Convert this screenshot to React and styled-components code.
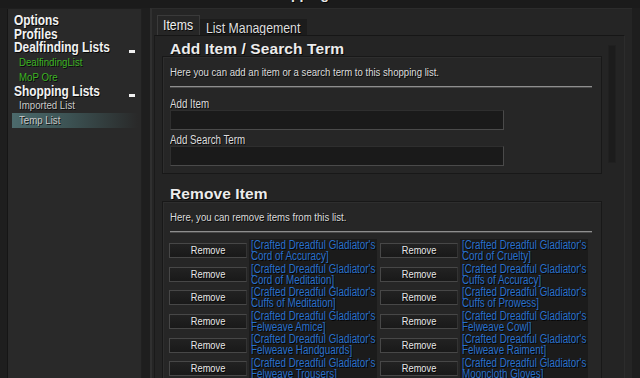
import styled, { createGlobalStyle } from 'styled-components';

const SANS = `"Liberation Sans", Arial, sans-serif`;
const SHADOW = '1px 1px 0 rgba(0, 0, 0, 0.85)';

const GlobalStyle = createGlobalStyle`
  html, body {
    margin: 0;
    padding: 0;
    background: #1d1d1d;
    overflow: hidden;
  }
  * {
    box-sizing: border-box;
  }
`;

// the game UI uses an Arial Narrow style face; squeeze Liberation Sans to its width
const Narrow = styled.span`
  display: inline-block;
  white-space: nowrap;
  transform: scaleX(0.82);
  transform-origin: ${({ $center }) => ($center ? 'center' : 'left')} center;
`;

const StyledPage = styled.div`
  width: 640px;
  height: 378px;
  overflow: hidden;
  display: flex;
  flex-direction: column;
  background: #1e1e1e;
  font-family: ${SANS};
  text-shadow: ${SHADOW};
`;

const StyledTitleStrip = styled.div`
  height: 8px;
  flex: none;
  overflow: hidden;
  background: #1b1b1b;
  display: flex;
  justify-content: center;
  padding-right: 10px;
`;

const StyledTitle = styled.span`
  margin-top: -14px;
  font: bold 14px ${SANS};
  line-height: 16px;
  color: #e6e6e6;
`;

const StyledBody = styled.div`
  flex: 1;
  min-height: 0;
  display: flex;
  gap: 8px;
  padding-left: 7px;
`;

const StyledSidebar = styled.nav`
  width: 135px;
  margin-top: 1px;
  padding: 5px 3px 0 4px;
  background: #292929;
  border-left: 1px solid #151515;
  border-right: 1px solid #202020;
  display: flex;
  flex-direction: column;
`;

const StyledNavHeader = styled.div`
  display: grid;
  grid-template-columns: minmax(0, 1fr) auto;
  align-items: start;
  padding-left: 2px;
  font-weight: bold;
  font-size: 14.5px;
  line-height: 13.5px;
  color: #f2f2f2;
`;

const StyledCollapse = styled.span`
  width: 6px;
  height: 3px;
  margin: 9px 3px 0 0;
  background: #f0f0f0;
`;

const StyledNavItem = styled.div`
  padding-left: 7px;
  font-size: 11.8px;
  line-height: 15px;
  color: ${({ $tone }) => ($tone === 'green' ? '#3cb524' : '#cacaca')};
  background: ${({ $selected }) =>
    $selected ? 'linear-gradient(to right, #4c6a6c 0%, #3c5253 45%, rgba(41,41,41,0) 100%)' : 'none'};
`;

const StyledMain = styled.main`
  width: 482px;
  display: flex;
  flex-direction: column;
  background: #252525;
  border-left: 2px solid #303030;
  border-top: 1px solid #2c2c2c;
`;

const StyledTabs = styled.div`
  display: flex;
  align-items: flex-end;
  padding: 6px 0 0 5px;
  height: 26px;
  flex: none;
`;

const StyledTab = styled.div`
  width: ${({ $width }) => $width}px;
  height: ${({ $active }) => ($active ? '20px' : '16px')};
  padding-left: ${({ $active }) => ($active ? '5px' : '6px')};
  font-size: 15px;
  line-height: ${({ $active }) => ($active ? '18px' : '17px')};
  color: ${({ $active }) => ($active ? '#f0f0f0' : '#dedede')};
  background: ${({ $active }) => ($active ? '#262626' : '#1c1c1c')};
  border: ${({ $active }) => ($active ? '1px solid #3a3a3a' : 'none')};
  border-bottom: none;
  overflow: hidden;
`;

const StyledFrame = styled.div`
  flex: 1;
  min-height: 0;
  margin: 0 7px 0 2px;
  padding: 0 8px 0 7px;
  display: flex;
  align-items: flex-start;
  background: #242424;
  border-top: 1px solid #161616;
  border-left: 1px solid #1a1a1a;
  border-right: 1px solid #2c2c2c;
`;

const StyledContent = styled.div`
  width: 440px;
  flex: none;
`;

const StyledScrollTrack = styled.div`
  width: 9px;
  margin-left: 6px;
  padding-top: 9px;
`;

const StyledScrollThumb = styled.div`
  height: 118px;
  background: #1c1c1c;
  border: 1px solid #202020;
`;

const StyledHeading = styled.h2`
  margin: ${({ $first }) => ($first ? '5px' : '12px')} 0 0;
  padding-left: 8px;
  font: bold 15.5px ${SANS};
  line-height: 15px;
  color: #ececec;
  letter-spacing: 0.1px;
`;

const StyledGroup = styled.section`
  padding: 8px 7px 7px;
  background: #262626;
  border: 1px solid #181818;
  box-shadow: inset 1px 1px 0 #2e2e2e;
`;

const StyledText = styled.div`
  font-size: 11.7px;
  line-height: 13px;
  color: #dcdcdc;
`;

const StyledRule = styled.hr`
  margin: 8px 2px 0 0;
  height: 2px;
  border: none;
  border-top: 1px solid #8e8e8e;
  border-bottom: 1px solid #4a4a4a;
`;

const StyledLabel = styled.label`
  display: block;
  margin-top: ${({ $first }) => ($first ? '10px' : '4px')};
  font-size: 11.9px;
  line-height: 12px;
  color: #dcdcdc;
`;

const StyledInput = styled.div`
  width: 334px;
  height: 20px;
  background: #1a1a1a;
  border: 1px solid #2e2e2e;
  border-right-color: #4a4a4a;
  border-bottom-color: #4a4a4a;
`;

const StyledItemGrid = styled.div`
  margin: 6px 0 0 -1px;
  display: grid;
  grid-template-columns: 208px 208px;
  grid-auto-rows: 23.6px;
  column-gap: 3px;
`;

const StyledEntry = styled.div`
  display: flex;
  gap: 2px;
`;

const StyledRemoveButton = styled.button`
  width: 78px;
  height: 15px;
  align-self: center;
  padding: 0;
  font-family: ${SANS};
  font-size: 11.3px;
  line-height: 13px;
  color: #e8e8e8;
  text-shadow: ${SHADOW};
  background: linear-gradient(#222, #191919);
  border: 1px solid #474747;
  border-right-color: #333;
  border-radius: 0;
`;

const StyledItemLink = styled.a`
  width: 128px;
  padding: 1px 0 0 2px;
  background: #1b1b1b;
  font-size: 12px;
  line-height: 11px;
  color: #2870cc;
  text-decoration: none;
`;

const ITEMS = [
  ['Cord of Accuracy', 'Cord of Cruelty'],
  ['Cord of Meditation', 'Cuffs of Accuracy'],
  ['Cuffs of Meditation', 'Cuffs of Prowess'],
  ['Felweave Amice', 'Felweave Cowl'],
  ['Felweave Handguards', 'Felweave Raiment'],
  ['Felweave Trousers', 'Mooncloth Gloves'],
];

function Entry({ name }) {
  return (
    <StyledEntry>
      <StyledRemoveButton>
        <Narrow $center>Remove</Narrow>
      </StyledRemoveButton>
      <StyledItemLink href='#'>
        <Narrow>
          [Crafted Dreadful Gladiator's
          <br />
          {name}]
        </Narrow>
      </StyledItemLink>
    </StyledEntry>
  );
}

function NavHeader({ children, collapsible }) {
  return (
    <StyledNavHeader>
      <Narrow>{children}</Narrow>
      {collapsible && <StyledCollapse />}
    </StyledNavHeader>
  );
}

export default function App() {
  return (
    <>
      <GlobalStyle />
      <StyledPage>
        <StyledTitleStrip>
          <StyledTitle>Shopping Lists</StyledTitle>
        </StyledTitleStrip>
        <StyledBody>
          <StyledSidebar>
            <NavHeader>Options</NavHeader>
            <NavHeader>Profiles</NavHeader>
            <NavHeader collapsible>Dealfinding Lists</NavHeader>
            <StyledNavItem $tone='green'>
              <Narrow>DealfindingList</Narrow>
            </StyledNavItem>
            <StyledNavItem $tone='green'>
              <Narrow>MoP Ore</Narrow>
            </StyledNavItem>
            <NavHeader collapsible>Shopping Lists</NavHeader>
            <StyledNavItem>
              <Narrow>Imported List</Narrow>
            </StyledNavItem>
            <StyledNavItem $selected>
              <Narrow>Temp List</Narrow>
            </StyledNavItem>
          </StyledSidebar>
          <StyledMain>
            <StyledTabs>
              <StyledTab $active $width={43}>
                <Narrow>Items</Narrow>
              </StyledTab>
              <StyledTab $width={107}>
                <Narrow>List Management</Narrow>
              </StyledTab>
            </StyledTabs>
            <StyledFrame>
              <StyledContent>
                <StyledHeading $first>Add Item / Search Term</StyledHeading>
                <StyledGroup>
                  <StyledText>
                    <Narrow>Here you can add an item or a search term to this shopping list.</Narrow>
                  </StyledText>
                  <StyledRule />
                  <StyledLabel $first>
                    <Narrow>Add Item</Narrow>
                  </StyledLabel>
                  <StyledInput />
                  <StyledLabel>
                    <Narrow>Add Search Term</Narrow>
                  </StyledLabel>
                  <StyledInput />
                </StyledGroup>
                <StyledHeading>Remove Item</StyledHeading>
                <StyledGroup>
                  <StyledText>
                    <Narrow>Here, you can remove items from this list.</Narrow>
                  </StyledText>
                  <StyledRule />
                  <StyledItemGrid>
                    {ITEMS.map(([left, right]) => [
                      <Entry key={left} name={left} />,
                      <Entry key={right} name={right} />,
                    ])}
                  </StyledItemGrid>
                </StyledGroup>
              </StyledContent>
              <StyledScrollTrack>
                <StyledScrollThumb />
              </StyledScrollTrack>
            </StyledFrame>
          </StyledMain>
        </StyledBody>
      </StyledPage>
    </>
  );
}
